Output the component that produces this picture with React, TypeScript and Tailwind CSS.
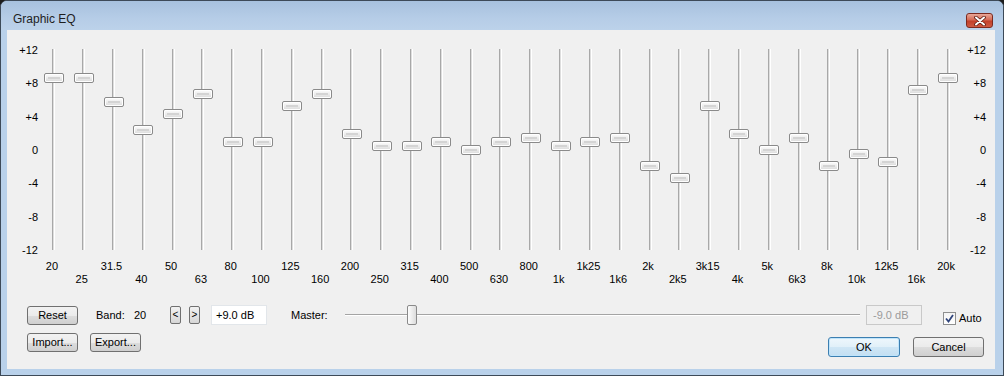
import React from 'react';

const bands: [string, number][] = [
  ['20', 9], ['25', 9], ['31.5', 6], ['40', 2.5], ['50', 4.5], ['63', 7], ['80', 1], ['100', 1],
  ['125', 5.5], ['160', 7], ['200', 2], ['250', 0.5], ['315', 0.5], ['400', 1], ['500', 0], ['630', 1],
  ['800', 1.5], ['1k', 0.5], ['1k25', 1], ['1k6', 1.5], ['2k', -2], ['2k5', -3.5], ['3k15', 5.5], ['4k', 2],
  ['5k', 0], ['6k3', 1.5], ['8k', -2], ['10k', -0.5], ['12k5', -1.5], ['16k', 7.5], ['20k', 9],
];

const scale = ['+12', '+8', '+4', '0', '-4', '-8', '-12'];

const btn =
  'h-[19px] rounded-[3px] border border-[#707070] bg-[linear-gradient(#f2f2f2_0%,#ebebeb_50%,#dddddd_51%,#cfcfcf_100%)] text-black leading-[17px] text-center';

const ScaleColumn: React.FC<{ right?: boolean }> = ({ right }) => (
  <div className={`flex flex-col justify-between h-[216px] text-right ${right ? 'w-[32px] pr-[9px]' : 'w-[32px] pr-[1px]'}`}>
    {scale.map((s) => (
      <div key={s} className="h-[16px] leading-[16px]">{s}</div>
    ))}
  </div>
);

const Band: React.FC<{ label: string; db: number; idx: number }> = ({ label, db, idx }) => (
  <div className="flex flex-col items-center">
    <div className="relative h-[201px] w-full flex justify-center">
      <div className="w-[3px] h-full border-l border-[#a8a8a8] bg-[#dedede] border-r border-r-white" />
      <div
        className="absolute left-1/2 -translate-x-1/2 w-[20px] h-[10px] rounded-[2px] border border-[#8a8a8a] bg-[linear-gradient(#fdfdfd,#eeeeee_45%,#dadada)] shadow-[inset_0_0_0_1px_#ffffff]"
        style={{ top: 96 - 8 * db }}
      >
        <div className="mx-[3px] mt-[3px] h-[2px] bg-[#d4d4d4]" />
      </div>
    </div>
    <div className="mt-[10px] h-[13px] leading-[13px] pr-[4px] whitespace-nowrap">{idx % 2 === 0 ? label : ''}</div>
    <div className="h-[13px] leading-[13px] pr-[4px] whitespace-nowrap">{idx % 2 === 1 ? label : ''}</div>
  </div>
);

export default function App() {
  return (
    <div className="w-[1004px] h-[376px] bg-[#1c1c1c] overflow-hidden" style={{ fontFamily: '"Liberation Sans", Arial, sans-serif' }}>
      <div className="w-full h-full flex flex-col rounded-t-[7px] border border-[#3d4a58] bg-[#b9d1ea] overflow-hidden text-[11px] text-black">
        {/* title bar */}
        <div className="h-[29px] flex items-center bg-[linear-gradient(#a7c1de,#b6cde7_60%,#bcd2ea)] pl-[12px] pr-[10px]">
          <span className="text-[12px] text-[#1e1e1e] mt-[6px]">Graphic EQ</span>
          <div className="ml-auto mt-[10px] w-[27px] h-[15px] rounded-[3px] border border-[#7c2a1f] bg-[linear-gradient(#e9a898,#d56a55_45%,#c2402a_55%,#cf5a42)] flex items-center justify-center">
            <svg width="12" height="10" viewBox="0 0 12 10">
              <path d="M2 1.5 L10 8.5 M10 1.5 L2 8.5" stroke="#5a1a10" strokeWidth="3.6" strokeLinecap="round" />
              <path d="M2 1.5 L10 8.5 M10 1.5 L2 8.5" stroke="#ffffff" strokeWidth="2" strokeLinecap="round" />
            </svg>
          </div>
        </div>

        {/* client */}
        <div className="flex-1 ml-[6px] mr-[8px] mb-[6px] bg-[#f0f0f0] flex flex-col pt-[12px]">
          <div className="flex items-start h-[244px]">
            <ScaleColumn />
            <div className="flex-1 grid grid-cols-[repeat(31,minmax(0,1fr))] pt-[7px]">
              {bands.map(([l, db], i) => (
                <Band key={l} label={l} db={db} idx={i} />
              ))}
            </div>
            <ScaleColumn right />
          </div>

          {/* controls row 1 */}
          <div className="mt-[19px] h-[20px] flex items-center pl-[20px]">
            <div className={`${btn} w-[51px]`}>Reset</div>
            <span className="ml-[18px] w-[38px]">Band:</span>
            <span className="w-[36px]">20</span>
            <div className="w-[11px] h-[18px] rounded-[2px] border border-[#707070] bg-[linear-gradient(#f2f2f2,#d6d6d6)] leading-[15px] text-center text-[10px]">&lt;</div>
            <div className="ml-[8px] w-[11px] h-[18px] rounded-[2px] border border-[#707070] bg-[linear-gradient(#f2f2f2,#d6d6d6)] leading-[15px] text-center text-[10px]">&gt;</div>
            <div className="ml-[11px] w-[56px] h-[20px] bg-white border border-[#e2e6ea] pl-[4px] leading-[18px]">+9.0 dB</div>
            <span className="ml-[24px] w-[54px]">Master:</span>
            <div className="relative w-[515px] h-[20px] flex items-center">
              <div className="w-full h-[2px] border-t border-[#a4a4a4] bg-white" />
              <div className="absolute left-[62px] top-0 w-[10px] h-[20px] rounded-[2px] border border-[#8a8a8a] bg-[linear-gradient(90deg,#fdfdfd,#ececec_50%,#dcdcdc)]" />
            </div>
            <div className="ml-[6px] w-[56px] h-[20px] border border-[#c9c9c9] bg-[#f0f0f0] pl-[6px] leading-[18px] text-[#9b9b9b]">-9.0 dB</div>
            <div className="ml-[21px] mt-[6px] w-[13px] h-[13px] border border-[#8e8f8f] bg-[linear-gradient(#f4f4f4,#ffffff)] flex items-center justify-center">
              <svg width="11" height="11" viewBox="0 0 11 11">
                <path d="M2 5.5 L4.5 8.5 L9 2" fill="none" stroke="#30457c" strokeWidth="1.8" />
              </svg>
            </div>
            <span className="ml-[3px] mt-[6px]">Auto</span>
          </div>

          {/* controls row 2 */}
          <div className="mt-[8px] flex items-start pl-[20px] pr-[11px]">
            <div className={`${btn} w-[51px]`}>Import...</div>
            <div className={`${btn} w-[51px] ml-[12px]`}>Export...</div>
            <div className="ml-auto mt-[4px] w-[72px] h-[20px] rounded-[3px] border border-[#3c7fb1] bg-[linear-gradient(#eef7fc_0%,#e1f0f9_50%,#cfe6f5_51%,#c3dff2_100%)] shadow-[inset_0_0_0_1px_#bfe4fb] text-center leading-[18px]">OK</div>
            <div className={`${btn} ml-[13px] mt-[4px] w-[71px] h-[20px] leading-[18px]`}>Cancel</div>
          </div>
        </div>
      </div>
    </div>
  );
}
